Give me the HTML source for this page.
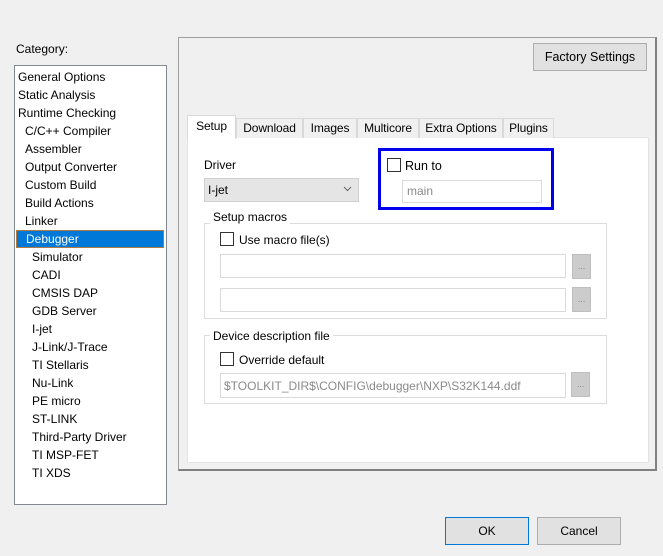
<!DOCTYPE html>
<html><head><style>
*{box-sizing:border-box;margin:0;padding:0}
body{width:663px;height:556px;background:#f0f0f0;font-family:"Liberation Sans",sans-serif;font-size:12px;color:#000;position:relative;overflow:hidden}
.a{position:absolute}
.t{position:absolute;white-space:nowrap;line-height:14px}
.li{position:absolute;left:0;width:148px;height:18px;line-height:18px;padding-left:3px}
.btn{position:absolute;background:#e1e1e1;border:1px solid #adadad;text-align:center}
.cb{position:absolute;width:14px;height:14px;border:1px solid #333;background:#fff}
.fld{position:absolute;background:#fff;border:1px solid #d9d9d9}
.dots{position:absolute;background:#ccc;border:1px solid #bfbfbf;color:#888;font-size:9px;text-align:center;line-height:22px}
.grp{position:absolute;border:1px solid #dcdcdc}
.tab{position:absolute;top:118px;height:20px;border:1px solid #d9d9d9;border-bottom:none;background:#f0f0f0;text-align:center;line-height:19px;font-size:12px;letter-spacing:-0.1px}
</style></head><body>
<div class="t" style="left:16px;top:42px">Category:</div>
<div class="a" style="left:14px;top:65px;width:153px;height:440px;background:#fff;border:1px solid #828790">
<div class="li" style="top:2px">General Options</div>
<div class="li" style="top:20px">Static Analysis</div>
<div class="li" style="top:38px">Runtime Checking</div>
<div class="li" style="top:56px;padding-left:10px">C/C++ Compiler</div>
<div class="li" style="top:74px;padding-left:10px">Assembler</div>
<div class="li" style="top:92px;padding-left:10px">Output Converter</div>
<div class="li" style="top:110px;padding-left:10px">Custom Build</div>
<div class="li" style="top:128px;padding-left:10px">Build Actions</div>
<div class="li" style="top:146px;padding-left:10px">Linker</div>
<div class="li" style="top:164px;left:1px;padding-left:9px;background:#0078d7;color:#fff;border:1px solid #b07a40;line-height:16px">Debugger</div>
<div class="li" style="top:182px;padding-left:17px">Simulator</div>
<div class="li" style="top:200px;padding-left:17px">CADI</div>
<div class="li" style="top:218px;padding-left:17px">CMSIS DAP</div>
<div class="li" style="top:236px;padding-left:17px">GDB Server</div>
<div class="li" style="top:254px;padding-left:17px">I-jet</div>
<div class="li" style="top:272px;padding-left:17px">J-Link/J-Trace</div>
<div class="li" style="top:290px;padding-left:17px">TI Stellaris</div>
<div class="li" style="top:308px;padding-left:17px">Nu-Link</div>
<div class="li" style="top:326px;padding-left:17px">PE micro</div>
<div class="li" style="top:344px;padding-left:17px">ST-LINK</div>
<div class="li" style="top:362px;padding-left:17px">Third-Party Driver</div>
<div class="li" style="top:380px;padding-left:17px">TI MSP-FET</div>
<div class="li" style="top:398px;padding-left:17px">TI XDS</div>
</div>

<div class="a" style="left:178px;top:37px;width:479px;height:434px;border:1px solid #a0a0a0;border-right:2px solid #808080;border-bottom:2px solid #808080"></div>
<div class="btn" style="left:533px;top:43px;width:114px;height:28px;line-height:26px;font-size:12.5px">Factory Settings</div>

<div class="a" style="left:187px;top:137px;width:462px;height:326px;background:#fff;border:1px solid #e3e3e3"></div>
<div class="tab" style="left:187px;top:115px;width:49px;height:24px;background:#fff;line-height:21px">Setup</div>
<div class="tab" style="left:236px;width:67px">Download</div>
<div class="tab" style="left:303px;width:54px">Images</div>
<div class="tab" style="left:357px;width:62px">Multicore</div>
<div class="tab" style="left:419px;width:84px">Extra Options</div>
<div class="tab" style="left:503px;width:51px">Plugins</div>

<div class="t" style="left:204px;top:158px">Driver</div>
<div class="a" style="left:204px;top:178px;width:155px;height:24px;background:#e5e5e5;border:1px solid #d0d0d0"></div>
<div class="t" style="left:208px;top:183px">I-jet</div>
<svg class="a" style="left:343px;top:186px" width="9" height="6"><path d="M1 1L4.5 4.5L8 1" stroke="#666" fill="none"/></svg>

<div class="a" style="left:378px;top:148px;width:176px;height:62px;border:3px solid #0000ee"></div>
<div class="cb" style="left:387px;top:158px"></div>
<div class="t" style="left:405px;top:159px;font-size:12.5px">Run to</div>
<div class="fld" style="left:402px;top:180px;width:140px;height:23px"></div>
<div class="t" style="left:407px;top:184px;color:#8a8a8a">main</div>

<div class="grp" style="left:204px;top:223px;width:403px;height:96px"></div>
<div class="t" style="left:210px;top:210px;background:#fff;padding:0 3px">Setup macros</div>
<div class="cb" style="left:220px;top:232px"></div>
<div class="t" style="left:239px;top:233px">Use macro file(s)</div>
<div class="fld" style="left:220px;top:254px;width:346px;height:24px"></div>
<div class="dots" style="left:572px;top:254px;width:19px;height:25px">...</div>
<div class="fld" style="left:220px;top:288px;width:346px;height:24px"></div>
<div class="dots" style="left:572px;top:287px;width:19px;height:25px">...</div>

<div class="grp" style="left:204px;top:335px;width:403px;height:69px"></div>
<div class="t" style="left:210px;top:329px;background:#fff;padding:0 3px">Device description file</div>
<div class="cb" style="left:220px;top:352px"></div>
<div class="t" style="left:239px;top:353px">Override default</div>
<div class="fld" style="left:220px;top:373px;width:346px;height:25px"></div>
<div class="t" style="left:224px;top:379px;color:#8a8a8a">$TOOLKIT_DIR$\CONFIG\debugger\NXP\S32K144.ddf</div>
<div class="dots" style="left:571px;top:372px;width:19px;height:25px">...</div>

<div class="btn" style="left:445px;top:517px;width:84px;height:28px;line-height:26px;border-color:#0078d7">OK</div>
<div class="btn" style="left:537px;top:517px;width:84px;height:28px;line-height:26px">Cancel</div>
</body></html>
